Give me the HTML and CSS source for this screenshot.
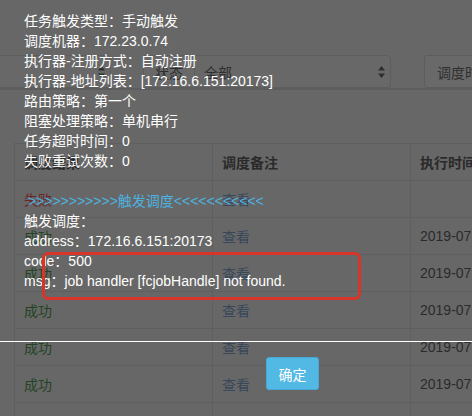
FILE: index.html
```html
<!DOCTYPE html>
<html lang="zh-CN">
<head>
<meta charset="UTF-8">
<meta name="viewport" content="width=device-width, initial-scale=1.0">
<title>调度日志</title>
<link rel="stylesheet" href="styles.css">
</head>
<body>
<div class="page">
  <div class="toolbar">
    <div class="group group-first">
      <div class="select">
        <svg class="arrows" width="7" height="12" viewBox="0 0 7 12"><path d="M3.5 0 L7 4.5 L0 4.5 Z M3.5 12 L7 7.5 L0 7.5 Z" fill="#2e2e2e"/></svg>
      </div>
    </div>
    <div class="group group-status">
      <span class="addon">状态</span>
      <div class="select">全部
        <svg class="arrows" width="7" height="12" viewBox="0 0 7 12"><path d="M3.5 0 L7 4.5 L0 4.5 Z M3.5 12 L7 7.5 L0 7.5 Z" fill="#2e2e2e"/></svg>
      </div>
    </div>
    <div class="group group-time">
      <span class="addon">调度时间</span>
    </div>
  </div>
  <div class="rule"></div>

  <table class="log">
    <thead>
      <tr><th>调度结果</th><th>调度备注</th><th>执行时间</th></tr>
    </thead>
    <tbody>
      <tr><td class="fail">失败</td><td class="link">查看</td><td></td></tr>
      <tr><td class="ok">成功</td><td class="link">查看</td><td>2019-07-19 10:21:08</td></tr>
      <tr><td class="ok">成功</td><td class="link">查看</td><td>2019-07-19 10:20:51</td></tr>
      <tr><td class="ok">成功</td><td class="link">查看</td><td>2019-07-19 10:20:33</td></tr>
      <tr><td class="ok">成功</td><td class="link">查看</td><td>2019-07-19 10:20:12</td></tr>
      <tr><td class="ok">成功</td><td class="link">查看</td><td>2019-07-19 10:19:54</td></tr>
      <tr><td></td><td></td><td></td></tr>
    </tbody>
  </table>
</div>

<div class="layer">
  <div class="layer-body">
    <div class="line">任务触发类型：手动触发</div>
    <div class="line">调度机器：172.23.0.74</div>
    <div class="line">执行器-注册方式：自动注册</div>
    <div class="line">执行器-地址列表：[172.16.6.151:20173]</div>
    <div class="line">路由策略：第一个</div>
    <div class="line">阻塞处理策略：单机串行</div>
    <div class="line">任务超时时间：0</div>
    <div class="line">失败重试次数：0</div>
    <div class="line"></div>
    <div class="line trigger"> &gt;&gt;&gt;&gt;&gt;&gt;&gt;&gt;&gt;&gt;&gt;触发调度&lt;&lt;&lt;&lt;&lt;&lt;&lt;&lt;&lt;&lt;&lt; </div>
    <div class="line">触发调度：</div>
    <div class="line">address：172.16.6.151:20173</div>
    <div class="line">code：500</div>
    <div class="line">msg：job handler [fcjobHandle] not found.</div>
    <span class="mark"></span>
  </div>
  <div class="layer-foot">
    <button class="btn-ok">确定</button>
  </div>
</div>
</body>
</html>
```

FILE: styles.css
```css
html {
  overflow: hidden;
}

body {
  margin: 0;
  width: 472px;
  height: 416px;
  overflow: hidden;
  position: relative;
  background-color: #676767;
  font-family: "Liberation Sans", "Noto Sans CJK SC", sans-serif;
  font-size: 14px;
}

.page {
  width: 472px;
  height: 416px;
  overflow: hidden;
}

/* search bar behind the dialog */
.toolbar {
  display: flex;
  padding-top: 55px;
  height: 33px;
  white-space: nowrap;
}

.group {
  display: flex;
  height: 33px;
  flex-shrink: 0;
}

.group-first {
  width: 111px;
  margin-right: 32px;
}

.group-status {
  width: 248px;
  margin-right: 33px;
}

.group-time {
  width: 200px;
}

.addon {
  display: flex;
  align-items: center;
  justify-content: center;
  height: 31px;
  border: 1px solid #5d5d5d;
  background: #696969;
  color: #2f2f2f;
}

.group-status .addon {
  width: 50px;
  border-right: none;
}

.group-time .addon {
  padding: 0 12px;
  justify-content: flex-start;
  width: 100%;
  border-radius: 3px 0 0 3px;
}

.select {
  flex: 1;
  display: flex;
  align-items: center;
  height: 31px;
  padding-left: 9px;
  border: 1px solid #5d5d5d;
  border-radius: 0 4px 4px 0;
  background: #686868;
  color: #2f2f2f;
}

.group-first .select {
  border-left: none;
}

.arrows {
  margin-left: auto;
  margin-right: 5px;
}

.rule {
  height: 2px;
  background: #5d5d5d;
}

/* log table */
.log {
  margin-top: 53px;
  margin-left: 14px;
  border-collapse: collapse;
  table-layout: fixed;
  width: 591px;
}

.log th,
.log td {
  width: 179px;
  height: 36px;
  padding: 0 9px;
  border: 1px solid #5f5f5f;
  text-align: left;
  white-space: nowrap;
  overflow: hidden;
  color: #2b2b2b;
}

.log th {
  font-weight: bold;
  color: #2a2a2a;
}

.log td.ok {
  color: #234423;
}

.log td.fail {
  color: #6b2626;
}

.log td.link {
  color: #39475a;
}

/* dialog layer */
.layer {
  position: absolute;
  top: 0;
  left: 0;
  width: 472px;
  height: 416px;
}

.layer-body {
  position: relative;
  padding: 11px 24px 0;
  color: #fff;
}

.line {
  height: 20px;
  line-height: 20px;
  white-space: pre;
}

.trigger {
  color: #4db3e0;
}

.mark {
  position: absolute;
  top: 252px;
  left: 42px;
  width: 313px;
  height: 42px;
  border: 3px solid #d8352a;
  border-radius: 6px;
}

.layer-foot {
  margin-top: 50px;
  border-top: 1px solid #fff;
  padding-top: 15px;
  padding-left: 266px;
}

.btn-ok {
  width: 53px;
  height: 33px;
  padding: 0;
  border: 1px solid #47a9d5;
  border-radius: 3px;
  background: #52b8e4;
  color: #fff;
  font-family: inherit;
  font-size: 14px;
}
```
